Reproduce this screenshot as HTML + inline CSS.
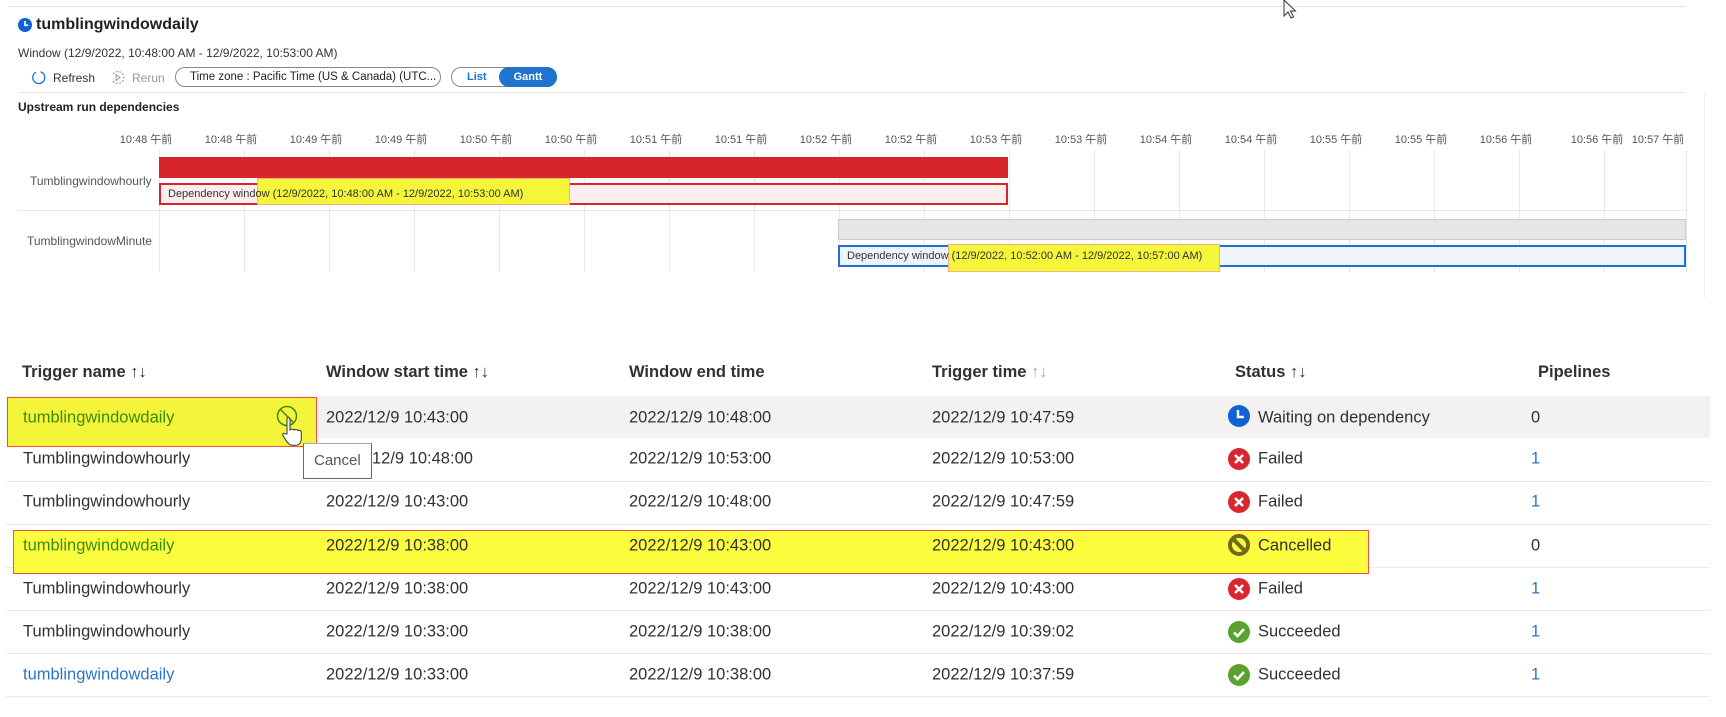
<!DOCTYPE html>
<html><head><meta charset="utf-8"><style>
*{margin:0;padding:0;box-sizing:border-box}
body{width:1726px;height:717px;background:#fff;position:relative;overflow:hidden;font-family:"Liberation Sans","Noto Sans CJK JP",sans-serif;color:#323130}
.a{position:absolute;white-space:nowrap}
.tl{position:absolute;top:131px;font-size:11px;color:#555;transform:translateX(-50%)}
.gl{position:absolute;top:150px;height:122px;width:1px;background:#e8e8e8}
.hd{position:absolute;top:363px;font-size:16.5px;font-weight:bold;color:#323130}
.c{position:absolute;font-size:16.5px;color:#323130;transform:translateY(-50%)}
.sep{position:absolute;left:6px;width:1704px;height:1px;background:#edebe9}
.lk{color:#2b75c9}
</style></head><body>
<div class="a" style="left:8px;top:6px;width:1678px;height:1px;background:#e6e6e6"></div>
<svg class="a" style="left:18px;top:18px" width="14" height="14" viewBox="0 0 14 14"><circle cx="7" cy="7" r="7" fill="#1160d4"/><path d="M7 3v4.3h3.2" stroke="#fff" stroke-width="1.7" fill="none"/></svg>
<div class="a" style="left:36px;top:16px;font-size:16px;font-weight:bold;color:#222">tumblingwindowdaily</div>
<div class="a" style="left:18px;top:46px;font-size:12px;color:#333">Window (12/9/2022, 10:48:00 AM - 12/9/2022, 10:53:00 AM)</div>
<svg class="a" style="left:31px;top:70px" width="15" height="15" viewBox="0 0 15 15"><path d="M5 2.2A6 6 0 1 0 9.5 1.8" stroke="#1a73d8" stroke-width="1.3" fill="none"/></svg>
<div class="a" style="left:53px;top:71px;font-size:12px;color:#333">Refresh</div>
<svg class="a" style="left:110px;top:70px" width="15" height="15" viewBox="0 0 15 15"><path d="M3 4A6 6 0 1 1 3 11" stroke="#999" stroke-width="1.1" fill="none" stroke-dasharray="2 1.5"/><path d="M6 4.5l4 3-4 3z" stroke="#999" fill="none"/></svg>
<div class="a" style="left:132px;top:71px;font-size:12px;color:#999">Rerun</div>
<div class="a" style="left:175px;top:67px;width:266px;height:20px;border:1px solid #8a8886;border-radius:10px;font-size:11.5px;color:#222;padding:3px 0 0 14px;overflow:hidden">Time zone : Pacific Time (US &amp; Canada) (UTC...</div>
<div class="a" style="left:451px;top:67px;width:106px;height:20px;border:1px solid #8a8886;border-radius:10px"></div>
<div class="a" style="left:467px;top:70px;font-size:11px;font-weight:bold;color:#1a73d8;line-height:14px">List</div>
<div class="a" style="left:499px;top:67px;width:58px;height:20px;background:#1f74cd;border-radius:10px;color:#fff;font-size:11px;font-weight:bold;text-align:center;line-height:20px">Gantt</div>
<div class="a" style="left:18px;top:92px;width:1668px;height:1px;background:#e6e6e6"></div>
<div class="a" style="left:1704px;top:93px;width:1px;height:205px;background:#f0f0f0"></div>
<div class="a" style="left:18px;top:100px;font-size:12px;font-weight:bold;color:#222">Upstream run dependencies</div>

<div class="tl" style="left:146px">10:48 午前</div><div class="tl" style="left:231px">10:48 午前</div><div class="tl" style="left:316px">10:49 午前</div><div class="tl" style="left:401px">10:49 午前</div><div class="tl" style="left:486px">10:50 午前</div><div class="tl" style="left:571px">10:50 午前</div><div class="tl" style="left:656px">10:51 午前</div><div class="tl" style="left:741px">10:51 午前</div><div class="tl" style="left:826px">10:52 午前</div><div class="tl" style="left:911px">10:52 午前</div><div class="tl" style="left:996px">10:53 午前</div><div class="tl" style="left:1081px">10:53 午前</div><div class="tl" style="left:1166px">10:54 午前</div><div class="tl" style="left:1251px">10:54 午前</div><div class="tl" style="left:1336px">10:55 午前</div><div class="tl" style="left:1421px">10:55 午前</div><div class="tl" style="left:1506px">10:56 午前</div><div class="tl" style="left:1597px">10:56 午前</div><div class="tl" style="left:1658px">10:57 午前</div>

<div class="gl" style="left:159px"></div><div class="gl" style="left:244px"></div><div class="gl" style="left:329px"></div><div class="gl" style="left:414px"></div><div class="gl" style="left:499px"></div><div class="gl" style="left:584px"></div><div class="gl" style="left:669px"></div><div class="gl" style="left:754px"></div><div class="gl" style="left:839px"></div><div class="gl" style="left:924px"></div><div class="gl" style="left:1009px"></div><div class="gl" style="left:1094px"></div><div class="gl" style="left:1179px"></div><div class="gl" style="left:1264px"></div><div class="gl" style="left:1349px"></div><div class="gl" style="left:1434px"></div><div class="gl" style="left:1519px"></div><div class="gl" style="left:1604px"></div><div class="gl" style="left:1686px"></div>
<div class="a" style="left:18px;top:210px;width:1668px;height:1px;background:#e8e8e8"></div>

<div class="a" style="left:30px;top:174px;font-size:12px;color:#555">Tumblingwindowhourly</div>
<div class="a" style="left:159px;top:157px;width:849px;height:21px;background:#d7262b"></div>
<div class="a" style="left:159px;top:183px;width:849px;height:22px;background:#fbeeee;border:2px solid #d7262b"></div>
<div class="a" style="left:257px;top:178px;width:313px;height:27px;background:#f5f53a;border:1px solid #f0b080"></div>
<div class="a" style="left:168px;top:188px;font-size:11px;color:#333">Dependency window (12/9/2022, 10:48:00 AM - 12/9/2022, 10:53:00 AM)</div>

<div class="a" style="left:27px;top:234px;font-size:12px;color:#555">TumblingwindowMinute</div>
<div class="a" style="left:838px;top:219px;width:848px;height:21px;background:#e6e6e6;border:1px solid #ccc"></div>
<div class="a" style="left:838px;top:245px;width:848px;height:22px;background:#eef4fc;border:2px solid #1f6fd6"></div>
<div class="a" style="left:948px;top:244px;width:272px;height:28px;background:#f5f53a;border:1px solid #f0b080"></div>
<div class="a" style="left:847px;top:250px;font-size:11px;color:#333">Dependency window (12/9/2022, 10:52:00 AM - 12/9/2022, 10:57:00 AM)</div>

<div class="hd" style="left:22px">Trigger name <span style="font-weight:normal">↑↓</span></div>
<div class="hd" style="left:326px">Window start time <span style="font-weight:normal">↑↓</span></div>
<div class="hd" style="left:629px">Window end time</div>
<div class="hd" style="left:932px">Trigger time <span style="font-weight:normal;color:#aaa">↑↓</span></div>
<div class="hd" style="left:1235px">Status <span style="font-weight:normal">↑↓</span></div>
<div class="hd" style="left:1538px">Pipelines</div>

<div class="a" style="left:6px;top:396px;width:1704px;height:42px;background:#f3f2f1"></div>
<div class="sep" style="top:481px"></div><div class="sep" style="top:524px"></div><div class="sep" style="top:567px"></div><div class="sep" style="top:610px"></div><div class="sep" style="top:653px"></div><div class="sep" style="top:696px"></div>
<div class="a" style="left:7px;top:397px;width:310px;height:50px;background:#f4f43a;border:1px solid #f05040"></div>
<div class="a" style="left:13px;top:530px;width:1356px;height:44px;background:#fdfd40;border:1px solid #f05040"></div>

<div class="c" style="left:23px;top:418px;color:#3f8a10">tumblingwindowdaily</div>
<svg class="a" style="left:276px;top:405px" width="22" height="22" viewBox="0 0 22 22"><circle cx="11" cy="11" r="9.5" stroke="#3f8a10" stroke-width="1.5" fill="none"/><path d="M4.5 4.5l13 13" stroke="#3f8a10" stroke-width="1.5"/></svg>
<div class="a" style="left:303px;top:443px;width:69px;height:36px;background:#fff;border:1px solid #666;border-top:1px solid #aaa"></div>
<div class="a" style="left:314px;top:452px;font-size:15px;color:#555">Cancel</div>
<svg class="a" style="left:281px;top:416px" width="22" height="34" viewBox="0 0 22 34"><path d="M6 2c1.5-1 3 0 3 1.5V14l2-1c1.5 0 2 1 2 1l2-.5c1.3 0 1.8 1 1.8 1l1.5-.2c1.5 0 2 1.3 2 2v6c0 4-2 7-6 7h-3c-3 0-5-3-7-6l-2.5-4c-.5-1.5 1-2.5 2.2-1.5L6 18V3.5z" fill="#fff" stroke="#333" stroke-width="1"/></svg>

<div class="c" style="left:23px;top:459px">Tumblingwindowhourly</div>
<div class="c" style="left:23px;top:502px">Tumblingwindowhourly</div>
<div class="c" style="left:23px;top:546px;color:#3f8a10">tumblingwindowdaily</div>
<div class="c" style="left:23px;top:589px">Tumblingwindowhourly</div>
<div class="c" style="left:23px;top:632px">Tumblingwindowhourly</div>
<div class="c lk" style="left:23px;top:675px">tumblingwindowdaily</div>

<div class="c" style="left:326px;top:418px">2022/12/9 10:43:00</div>
<div class="c" style="left:372px;top:459px">12/9 10:48:00</div>
<div class="c" style="left:326px;top:502px">2022/12/9 10:43:00</div>
<div class="c" style="left:326px;top:546px">2022/12/9 10:38:00</div>
<div class="c" style="left:326px;top:589px">2022/12/9 10:38:00</div>
<div class="c" style="left:326px;top:632px">2022/12/9 10:33:00</div>
<div class="c" style="left:326px;top:675px">2022/12/9 10:33:00</div>

<div class="c" style="left:629px;top:418px">2022/12/9 10:48:00</div>
<div class="c" style="left:629px;top:459px">2022/12/9 10:53:00</div>
<div class="c" style="left:629px;top:502px">2022/12/9 10:48:00</div>
<div class="c" style="left:629px;top:546px">2022/12/9 10:43:00</div>
<div class="c" style="left:629px;top:589px">2022/12/9 10:43:00</div>
<div class="c" style="left:629px;top:632px">2022/12/9 10:38:00</div>
<div class="c" style="left:629px;top:675px">2022/12/9 10:38:00</div>

<div class="c" style="left:932px;top:418px">2022/12/9 10:47:59</div>
<div class="c" style="left:932px;top:459px">2022/12/9 10:53:00</div>
<div class="c" style="left:932px;top:502px">2022/12/9 10:47:59</div>
<div class="c" style="left:932px;top:546px">2022/12/9 10:43:00</div>
<div class="c" style="left:932px;top:589px">2022/12/9 10:43:00</div>
<div class="c" style="left:932px;top:632px">2022/12/9 10:39:02</div>
<div class="c" style="left:932px;top:675px">2022/12/9 10:37:59</div>

<svg class="a" style="left:1228px;top:405px" width="22" height="22" viewBox="0 0 22 22"><circle cx="11" cy="11" r="11" fill="#1160d4"/><path d="M10 5v7h6" stroke="#fff" stroke-width="2.4" fill="none"/></svg>
<div class="c" style="left:1258px;top:418px">Waiting on dependency</div>
<svg class="a" style="left:1228px;top:448px" width="22" height="22" viewBox="0 0 22 22"><circle cx="11" cy="11" r="11" fill="#d8272f"/><path d="M7 7l8 8M15 7l-8 8" stroke="#fff" stroke-width="2.6"/></svg>
<div class="c" style="left:1258px;top:459px">Failed</div>
<svg class="a" style="left:1228px;top:491px" width="22" height="22" viewBox="0 0 22 22"><circle cx="11" cy="11" r="11" fill="#d8272f"/><path d="M7 7l8 8M15 7l-8 8" stroke="#fff" stroke-width="2.6"/></svg>
<div class="c" style="left:1258px;top:502px">Failed</div>
<svg class="a" style="left:1228px;top:534px" width="22" height="22" viewBox="0 0 22 22"><circle cx="11" cy="11" r="9" stroke="#6b6b1a" stroke-width="4" fill="none"/><path d="M5 5l12 12" stroke="#6b6b1a" stroke-width="4"/></svg>
<div class="c" style="left:1258px;top:546px">Cancelled</div>
<svg class="a" style="left:1228px;top:578px" width="22" height="22" viewBox="0 0 22 22"><circle cx="11" cy="11" r="11" fill="#d8272f"/><path d="M7 7l8 8M15 7l-8 8" stroke="#fff" stroke-width="2.6"/></svg>
<div class="c" style="left:1258px;top:589px">Failed</div>
<svg class="a" style="left:1228px;top:621px" width="22" height="22" viewBox="0 0 22 22"><circle cx="11" cy="11" r="11" fill="#5ba12f"/><path d="M6 11.5l3.5 3.5 6.5-7" stroke="#fff" stroke-width="2.6" fill="none"/></svg>
<div class="c" style="left:1258px;top:632px">Succeeded</div>
<svg class="a" style="left:1228px;top:664px" width="22" height="22" viewBox="0 0 22 22"><circle cx="11" cy="11" r="11" fill="#5ba12f"/><path d="M6 11.5l3.5 3.5 6.5-7" stroke="#fff" stroke-width="2.6" fill="none"/></svg>
<div class="c" style="left:1258px;top:675px">Succeeded</div>

<div class="c" style="left:1531px;top:418px">0</div>
<div class="c lk" style="left:1531px;top:459px">1</div>
<div class="c lk" style="left:1531px;top:502px">1</div>
<div class="c" style="left:1531px;top:546px">0</div>
<div class="c lk" style="left:1531px;top:589px">1</div>
<div class="c lk" style="left:1531px;top:632px">1</div>
<div class="c lk" style="left:1531px;top:675px">1</div>

<svg class="a" style="left:1282px;top:0px" width="20" height="20" viewBox="0 0 20 20"><path d="M2 0v16l4-4 3 6 2.5-1-3-6h5z" fill="#fff" stroke="#333" stroke-width="1"/></svg>
</body></html>
